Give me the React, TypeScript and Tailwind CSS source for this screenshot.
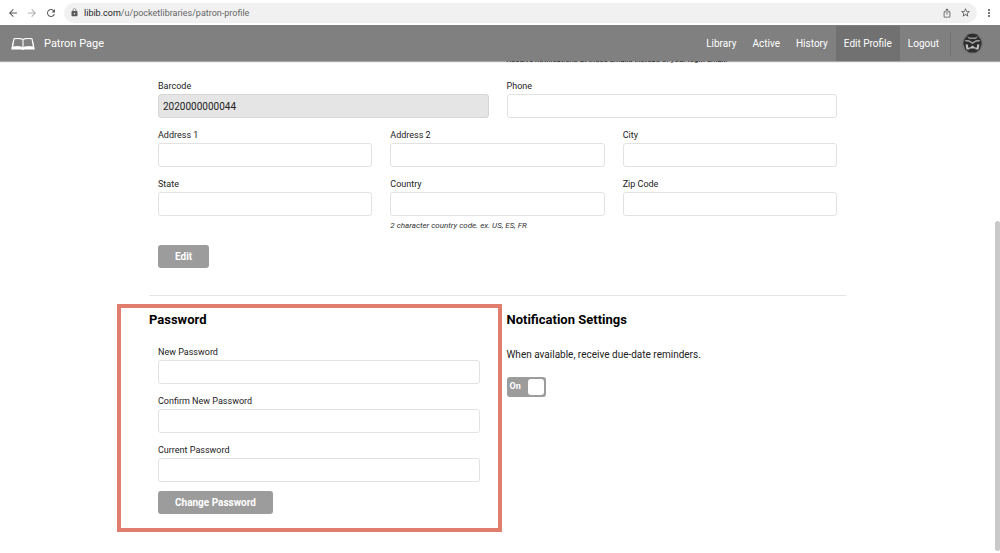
import { MdArrowBack, MdArrowForward, MdRefresh, MdLock, MdIosShare, MdStarOutline, MdMoreVert } from "react-icons/md";

const navLinks = ["Library", "Active", "History", "Edit Profile", "Logout"];

type FieldProps = {
  id: string;
  label: string;
  type?: string;
  value?: string;
  help?: string;
};

function Field({ id, label, type = "text", value, help }: FieldProps) {
  return (
    <div>
      <label htmlFor={id} className="block text-[9px] leading-4 text-[#222222]">
        {label}
      </label>
      <input
        id={id}
        type={type}
        defaultValue={value}
        readOnly={value !== undefined}
        className="block w-full h-6 px-1 rounded-[3px] border border-[#e2e2e2] bg-white text-[10px] text-[#222222] read-only:bg-[#e5e5e5] read-only:border-[#d6d6d6]"
      />
      {help && <p className="mt-1 text-[8px] leading-3 italic text-[#333333]">{help}</p>}
    </div>
  );
}

function Button({ children }: { children: string }) {
  return (
    <button type="button" className="block h-[23px] px-[17px] rounded-[3px] bg-[#9c9c9c] text-[10px] font-bold text-white">
      {children}
    </button>
  );
}

function BrowserBar() {
  return (
    <div className="flex items-center h-[25px] pl-[7px] pr-[5px] bg-white text-[#5a5a5a]">
      <button type="button" aria-label="Back" className="mr-[7px]">
        <MdArrowBack size={12} />
      </button>
      <button type="button" aria-label="Forward" className="mr-[7px] text-[#b0b0b0]">
        <MdArrowForward size={12} />
      </button>
      <button type="button" aria-label="Reload" className="mr-[7px]">
        <MdRefresh size={12} />
      </button>
      <div className="flex flex-1 items-center h-5 px-[6px] rounded-full bg-[#f1f1f1]">
        <MdLock size={9} />
        <span className="flex-1 ml-[5px] text-[9px] leading-4 text-[#666666]">
          <span className="text-[#222222]">libib.com</span>/u/pocketlibraries/patron-profile
        </span>
        <button type="button" aria-label="Share" className="mr-2">
          <MdIosShare size={10} />
        </button>
        <button type="button" aria-label="Bookmark">
          <MdStarOutline size={11} />
        </button>
      </div>
      <button type="button" aria-label="Menu" className="ml-[6px]">
        <MdMoreVert size={12} />
      </button>
    </div>
  );
}

function BookLogo() {
  return (
    <svg viewBox="0 0 24 12" className="w-6 h-3" aria-hidden="true">
      <path
        d="M3 .8C6 .3 9.300 .3 12 1.400 14.700 .3 18 .3 21 .8L22.700 9.800C19 9 15 8.900 12 10 9 8.900 5 9 1.300 9.800zM12 1.400V10"
        fill="none"
        stroke="#fff"
        strokeWidth="1.1"
        strokeLinejoin="round"
      />
      <path d="M2.400 1L.2 11.600h10.100c.7.5 2.700.5 3.400 0h10.100L21.600 1l.4 7.600c-4-.7-7.500-.6-10 .5-2.500-1.100-6-1.200-10-.5z" fill="#fff" />
    </svg>
  );
}

function Avatar() {
  return (
    <svg viewBox="0 0 21 21" className="w-[21px] h-[21px]" aria-hidden="true">
      <circle cx="10.500" cy="10.500" r="10.500" fill="#747474" />
      <path d="M6 1.500C8.500 .5 12.500 .5 15 1.500L19 7l.6 4-2 5.500-4 3h-6.200l-4-3-2-5.500L2 7z" fill="#2e2e2e" />
      <path d="M5 3L8 4.500h5L16 3l-2 3H7z" fill="#8c8c8c" />
      <path d="M2.500 7L7 7.200l3.500 2 3.500-2 4.500-.2-1.500 1.500-3 .3-3.500 2.200L7 8.800l-3-.3z" fill="#a8a8a8" />
      <path d="M3.500 11.500H6v3h2l2.500-2 2.500 2h2v-3h2.500l-1 5h-12z" fill="#bebebe" />
      <path d="M7.500 15.500h6v1.500h-6z" fill="#2e2e2e" />
    </svg>
  );
}

function Header() {
  return (
    <header className="relative z-10 flex items-center h-9 pt-px pl-[11px] pr-[17px] bg-[#808080] text-white shadow-[0_1px_1px_rgba(0,0,0,0.35)]">
      <BookLogo />
      <span className="ml-[9px] text-[11px] leading-4">Patron Page</span>
      <nav className="flex self-stretch ml-auto">
        {navLinks.map((link) => (
          <a
            key={link}
            href="#"
            className={
              link === "Edit Profile"
                ? "flex items-center px-2 text-[10px] bg-[#717171]"
                : "flex items-center px-2 text-[10px]"
            }
          >
            {link}
          </a>
        ))}
      </nav>
      <div className="w-px h-6 ml-[3px] mr-[11px] bg-[#727272]" />
      <Avatar />
    </header>
  );
}

function PasswordSection() {
  return (
    <section className="relative pt-[14px] pb-[18px]">
      <h2 className="text-[13px] leading-5 font-bold text-black">Password</h2>
      <form className="grid gap-[9px] mt-[14px] pl-[9px] pr-[18px]">
        <Field id="new-password" label="New Password" type="password" />
        <Field id="confirm-password" label="Confirm New Password" type="password" />
        <Field id="current-password" label="Current Password" type="password" />
        <div className="flex">
          <Button>Change Password</Button>
        </div>
      </form>
      <div className="absolute top-2 bottom-0 -left-8 -right-1 border-4 border-[#e07d6c] pointer-events-none" />
    </section>
  );
}

function NotificationSection() {
  return (
    <section className="pt-[14px] pl-[9px]">
      <h2 className="text-[13px] leading-5 font-bold text-black">Notification Settings</h2>
      <p id="reminders-text" className="mt-[17px] text-[10px] leading-4 text-[#222222]">
        When available, receive due-date reminders.
      </p>
      <label className="flex items-center justify-between w-[39px] h-5 mt-[14px] pl-[3px] pr-[2px] rounded-[3px] bg-[#9c9c9c]">
        <input type="checkbox" defaultChecked aria-describedby="reminders-text" className="sr-only" />
        <span className="text-[9px] font-bold text-white">On</span>
        <span className="w-4 h-4 rounded-[3px] bg-white" />
      </label>
    </section>
  );
}

export default function App() {
  return (
    <div className="relative min-h-screen overflow-hidden bg-white font-['Roboto',sans-serif]">
      <BrowserBar />
      <Header />
      <main className="pr-[5px] -mt-[7px]">
        <div className="max-w-[697px] mx-auto">
          <form className="grid gap-[9px] px-[9px]">
            <div className="grid grid-cols-2 gap-x-[18px] mb-[3px]">
              <p className="col-start-2 text-[8px] leading-3 italic text-[#333333]">
                Receive notifications at these emails instead of your login email.
              </p>
            </div>
            <div className="grid grid-cols-2 gap-x-[18px]">
              <Field id="barcode" label="Barcode" value="2020000000044" />
              <Field id="phone" label="Phone" />
            </div>
            <div className="grid grid-cols-3 gap-x-[18px] gap-y-[9px]">
              <Field id="address1" label="Address 1" />
              <Field id="address2" label="Address 2" />
              <Field id="city" label="City" />
              <Field id="state" label="State" />
              <Field id="country" label="Country" help="2 character country code. ex. US, ES, FR" />
              <Field id="zip" label="Zip Code" />
            </div>
            <div className="flex mt-1">
              <Button>Edit</Button>
            </div>
          </form>
          <hr className="mt-[27px] border-[#e4e4e4]" />
          <div className="grid grid-cols-2 items-start">
            <PasswordSection />
            <NotificationSection />
          </div>
        </div>
      </main>
      <div className="absolute right-0 top-[40%] bottom-[2px] w-[5px] rounded-full bg-[#c9c9c9]" />
    </div>
  );
}
